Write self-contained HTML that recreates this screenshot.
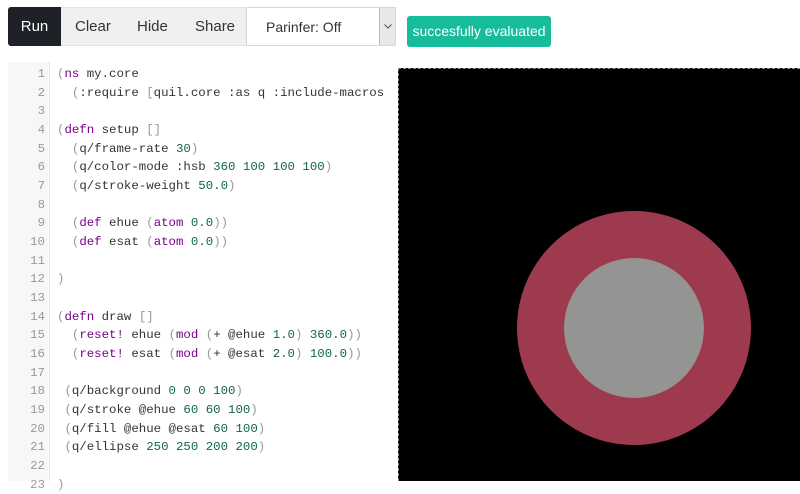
<!DOCTYPE html>
<html><head><style>
*{margin:0;padding:0;box-sizing:border-box}
body{width:800px;height:481px;background:#fff;position:relative;overflow:hidden;font-family:"Liberation Sans",sans-serif}
.bar{position:absolute;left:8px;top:7px;width:388px;height:39px;background:#f0f0f0;border-radius:3px;border:1px solid #e4e4e4}
.run{position:absolute;left:8px;top:7px;width:53px;height:39px;background:#1e2228;color:#fff;font-size:15px;line-height:40px;text-align:center;border-radius:3px 0 0 3px}
.b{position:absolute;top:7px;line-height:40px;font-size:15px;color:#333}
.sel{position:absolute;left:246px;top:7px;width:150px;height:39px;background:#fff;border:1px solid #d8d8d8;font-size:14px;line-height:38px;color:#333;padding-left:19px}
.arr{position:absolute;right:0;top:0;width:16px;height:37px;background:#e8e8e8;border-left:1px solid #bbb}
.arr svg{position:absolute;left:4px;top:16px}
.badge{position:absolute;left:407px;top:16px;width:144px;height:31px;background:#17bc9b;color:#fff;font-size:14px;line-height:31px;text-align:center;border-radius:3px}
.gut{position:absolute;left:8px;top:62px;width:42px;height:419px;background:#f7f7f7;border-right:1px solid #e8e8e8}
.code{position:absolute;left:0;top:65px;font-family:"Liberation Mono",monospace;font-size:12.4px;line-height:18.67px;white-space:pre;color:#333}
.n{display:inline-block;width:45px;text-align:right;color:#999;margin-right:12px}
.k{color:#708}.g{color:#164}.p{color:#999}
.cv{position:absolute;left:398px;top:68px;width:402px;height:413px;background:#000;border-top:1px dashed #888;border-left:1px dashed #888}
</style></head><body>
<div class="bar"></div>
<div class="run">Run</div>
<div class="b" style="left:75px">Clear</div>
<div class="b" style="left:137px">Hide</div>
<div class="b" style="left:195px">Share</div>
<div class="sel">Parinfer: Off<div class="arr"><svg width="8" height="5"><path d="M0.5 0.5L4 4L7.5 0.5" fill="none" stroke="#555" stroke-width="1"/></svg></div></div>
<div class="badge">succesfully evaluated</div>
<div class="gut"></div>
<div class="code"><span class="n">1</span><span class="p">(</span><span class="k">ns</span> my.core
<span class="n">2</span>  <span class="p">(</span>:require <span class="p">[</span>quil.core :as q :include-macros
<span class="n">3</span>
<span class="n">4</span><span class="p">(</span><span class="k">defn</span> setup <span class="p">[]</span>
<span class="n">5</span>  <span class="p">(</span>q/frame-rate <span class="g">30</span><span class="p">)</span>
<span class="n">6</span>  <span class="p">(</span>q/color-mode :hsb <span class="g">360 100 100 100</span><span class="p">)</span>
<span class="n">7</span>  <span class="p">(</span>q/stroke-weight <span class="g">50.0</span><span class="p">)</span>
<span class="n">8</span>
<span class="n">9</span>  <span class="p">(</span><span class="k">def</span> ehue <span class="p">(</span><span class="k">atom</span> <span class="g">0.0</span><span class="p">))</span>
<span class="n">10</span>  <span class="p">(</span><span class="k">def</span> esat <span class="p">(</span><span class="k">atom</span> <span class="g">0.0</span><span class="p">))</span>
<span class="n">11</span>
<span class="n">12</span><span class="p">)</span>
<span class="n">13</span>
<span class="n">14</span><span class="p">(</span><span class="k">defn</span> draw <span class="p">[]</span>
<span class="n">15</span>  <span class="p">(</span><span class="k">reset!</span> ehue <span class="p">(</span><span class="k">mod</span> <span class="p">(</span>+ @ehue <span class="g">1.0</span><span class="p">)</span> <span class="g">360.0</span><span class="p">))</span>
<span class="n">16</span>  <span class="p">(</span><span class="k">reset!</span> esat <span class="p">(</span><span class="k">mod</span> <span class="p">(</span>+ @esat <span class="g">2.0</span><span class="p">)</span> <span class="g">100.0</span><span class="p">))</span>
<span class="n">17</span>
<span class="n">18</span> <span class="p">(</span>q/background <span class="g">0 0 0 100</span><span class="p">)</span>
<span class="n">19</span> <span class="p">(</span>q/stroke @ehue <span class="g">60 60 100</span><span class="p">)</span>
<span class="n">20</span> <span class="p">(</span>q/fill @ehue @esat <span class="g">60 100</span><span class="p">)</span>
<span class="n">21</span> <span class="p">(</span>q/ellipse <span class="g">250 250 200 200</span><span class="p">)</span>
<span class="n">22</span>
<span class="n">23</span><span class="p">)</span></div>
<div class="cv"><svg width="402" height="413"><circle cx="235" cy="259" r="117" fill="#9e3a4e"/><circle cx="235" cy="259" r="70" fill="#949492"/></svg></div>
</body></html>
